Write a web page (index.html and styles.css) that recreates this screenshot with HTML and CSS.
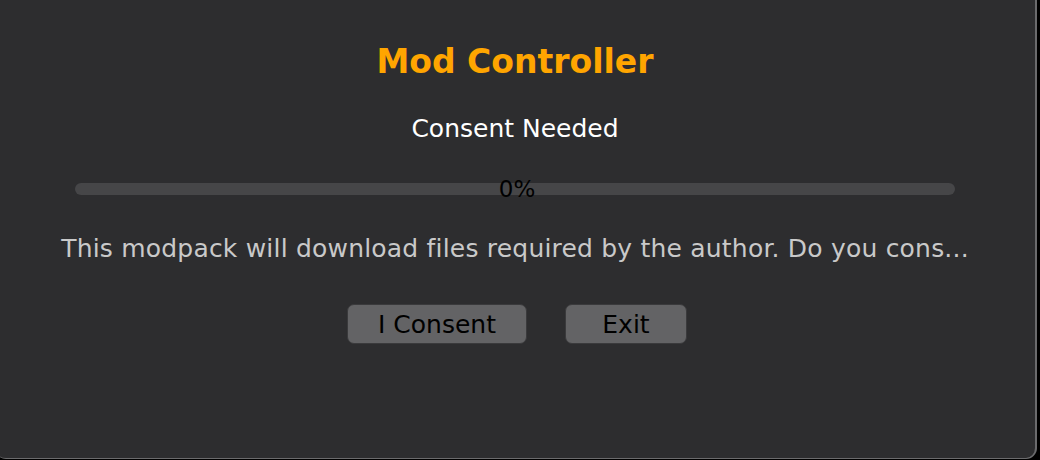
FILE: index.html
```html
<!DOCTYPE html>
<html lang="en">
<head>
  <meta charset="UTF-8">
  <title>Mod Controller</title>
  <link rel="stylesheet" href="styles.css">
</head>
<body>
  <div class="wnd">
    <h1 class="ttl">Mod Controller</h1>
    <div class="stat">Consent Needed</div>
    <div class="prg">
      <div class="prg_bar"><div class="prg_fill" style="width:0%"></div></div>
      <span class="prg_txt">0%</span>
    </div>
    <p class="msg">This modpack will download files required by the author. Do you cons...</p>
    <div class="btns">
      <button class="btn btn_ok">I Consent</button>
      <button class="btn btn_exit">Exit</button>
    </div>
  </div>
</body>
</html>
```

FILE: styles.css
```css
:root {
  --bg: #2d2d2f;
  --edge: #6b6b6d;
  --track: #464648;
  --accent: #ffa500;
  --btn: #636365;
}

body {
  margin: 0;
  background: #000;
  height: 460px;
  overflow: hidden;
  font-family: 'DejaVu Sans', 'Liberation Sans', sans-serif;
}

.wnd {
  margin-left: -5px;
  width: 1042px;
  height: 459px;
  box-sizing: border-box;
  background: var(--bg);
  border-right: 2px solid var(--edge);
  border-bottom: 1px solid var(--edge);
  border-radius: 0 0 11px 11px;
  display: flex;
  flex-direction: column;
  align-items: center;
  padding-top: 41px;
}

.ttl {
  margin: 0;
  color: var(--accent);
  font-size: 33px;
  font-weight: bold;
  line-height: 42px;
}

.stat {
  margin-top: 31px;
  color: #fff;
  font-size: 25px;
  line-height: 30px;
}

.prg {
  position: relative;
  margin-top: 30px;
  width: 880px;
  height: 30px;
  display: flex;
  justify-content: center;
}

.prg_bar {
  position: absolute;
  left: 0;
  right: 0;
  top: 9px;
  height: 12px;
  border-radius: 6px;
  background: var(--track);
  overflow: hidden;
}

.prg_fill {
  height: 100%;
  background: var(--accent);
}

.prg_txt {
  position: relative;
  left: 2px;
  color: #000;
  font-size: 23px;
  line-height: 30px;
}

.msg {
  margin: 29px 0 0;
  color: #c9c9c9;
  font-size: 25px;
  line-height: 32px;
  letter-spacing: 0.2px;
}

.btns {
  display: flex;
  gap: 38px;
  margin: 39px 0 0 4px;
}

.btn {
  height: 40px;
  border: 1px solid #3a3a3c;
  border-radius: 7px;
  background: var(--btn);
  color: #000;
  font-family: inherit;
  font-size: 25px;
  padding: 0;
}

.btn_ok { width: 180px; }
.btn_exit { width: 122px; }
```
